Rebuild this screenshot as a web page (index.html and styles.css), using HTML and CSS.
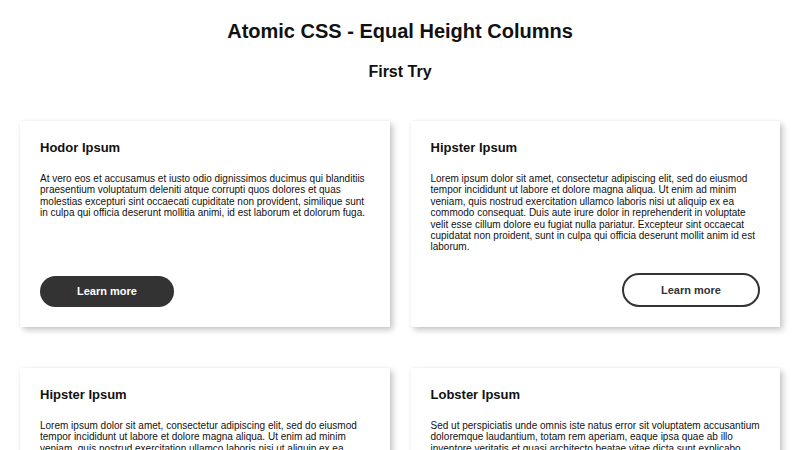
FILE: index.html
```html
<!DOCTYPE html>
<html>
<head>
<meta charset="utf-8">
<link rel="stylesheet" href="styles.css">
</head>
<body>
<header class="header">
  <h1 class="title">Atomic CSS - Equal Height Columns</h1>
  <h2 class="subtitle">First Try</h2>
</header>
<main class="grid">
  <section class="card">
    <h3 class="card-title">Hodor Ipsum</h3>
    <p class="card-text">At vero eos et accusamus et iusto odio dignissimos ducimus qui blanditiis praesentium voluptatum deleniti atque corrupti quos dolores et quas molestias excepturi sint occaecati cupiditate non provident, similique sunt in culpa qui officia deserunt mollitia animi, id est laborum et dolorum fuga.</p>
    <div class="card-actions">
      <a class="btn btn-filled">Learn more</a>
    </div>
  </section>
  <section class="card">
    <h3 class="card-title">Hipster Ipsum</h3>
    <p class="card-text">Lorem ipsum dolor sit amet, consectetur adipiscing elit, sed do eiusmod tempor incididunt ut labore et dolore magna aliqua. Ut enim ad minim veniam, quis nostrud exercitation ullamco laboris nisi ut aliquip ex ea commodo consequat. Duis aute irure dolor in reprehenderit in voluptate velit esse cillum dolore eu fugiat nulla pariatur. Excepteur sint occaecat cupidatat non proident, sunt in culpa qui officia deserunt mollit anim id est laborum.</p>
    <div class="card-actions card-actions-end">
      <a class="btn btn-outline">Learn more</a>
    </div>
  </section>
  <section class="card">
    <h3 class="card-title">Hipster Ipsum</h3>
    <p class="card-text">Lorem ipsum dolor sit amet, consectetur adipiscing elit, sed do eiusmod tempor incididunt ut labore et dolore magna aliqua. Ut enim ad minim veniam, quis nostrud exercitation ullamco laboris nisi ut aliquip ex ea commodo consequat. Duis aute irure dolor in reprehenderit in voluptate velit esse cillum dolore eu fugiat nulla pariatur. Excepteur sint occaecat cupidatat non proident, sunt in culpa qui officia deserunt mollit anim id est laborum.</p>
    <div class="card-actions">
      <a class="btn btn-filled">Learn more</a>
    </div>
  </section>
  <section class="card">
    <h3 class="card-title">Lobster Ipsum</h3>
    <p class="card-text">Sed ut perspiciatis unde omnis iste natus error sit voluptatem accusantium doloremque laudantium, totam rem aperiam, eaque ipsa quae ab illo inventore veritatis et quasi architecto beatae vitae dicta sunt explicabo. Nemo enim ipsam voluptatem quia voluptas sit aspernatur aut odit aut fugit.</p>
    <div class="card-actions card-actions-end">
      <a class="btn btn-outline">Learn more</a>
    </div>
  </section>
</main>
</body>
</html>
```
FILE: styles.css
```css
html, body {
  margin: 0;
  padding: 0;
  background: #fff;
  color: #111;
  font-family: "Liberation Sans", Arial, sans-serif;
}
.header {
  text-align: center;
  padding-top: 19px;
}
.title {
  margin: 0;
  font-size: 20px;
  line-height: 24px;
  font-weight: bold;
}
.subtitle {
  margin: 20px 0 0;
  font-size: 16px;
  line-height: 18px;
  font-weight: bold;
}
.grid {
  display: grid;
  grid-template-columns: 1fr 1fr;
  column-gap: 21px;
  row-gap: 41px;
  padding: 40px 20px 20px;
}
.card {
  display: flex;
  flex-direction: column;
  background: #fff;
  padding: 19px 20px 20px;
  box-shadow: 3px 3px 6px rgba(0, 0, 0, 0.22), 0 0 2px rgba(0, 0, 0, 0.06);
}
.card-title {
  margin: 0;
  font-size: 13px;
  line-height: 15px;
  font-weight: bold;
}
.card-text {
  margin: 18px 0 0;
  font-size: 10px;
  line-height: 11.4px;
}
.card-actions {
  margin-top: auto;
  padding-top: 20px;
  display: flex;
}
.card-actions-end {
  justify-content: flex-end;
}
.btn {
  display: flex;
  align-items: center;
  justify-content: center;
  box-sizing: border-box;
  font-size: 11px;
  font-weight: bold;
  border-radius: 999px;
  cursor: pointer;
}
.btn-filled {
  width: 134px;
  height: 31px;
  margin-bottom: 0;
  background: #333;
  color: #fff;
}
.btn-outline {
  width: 138px;
  height: 34px;
  border: 2px solid #333;
  color: #333;
  background: #fff;
}
```
